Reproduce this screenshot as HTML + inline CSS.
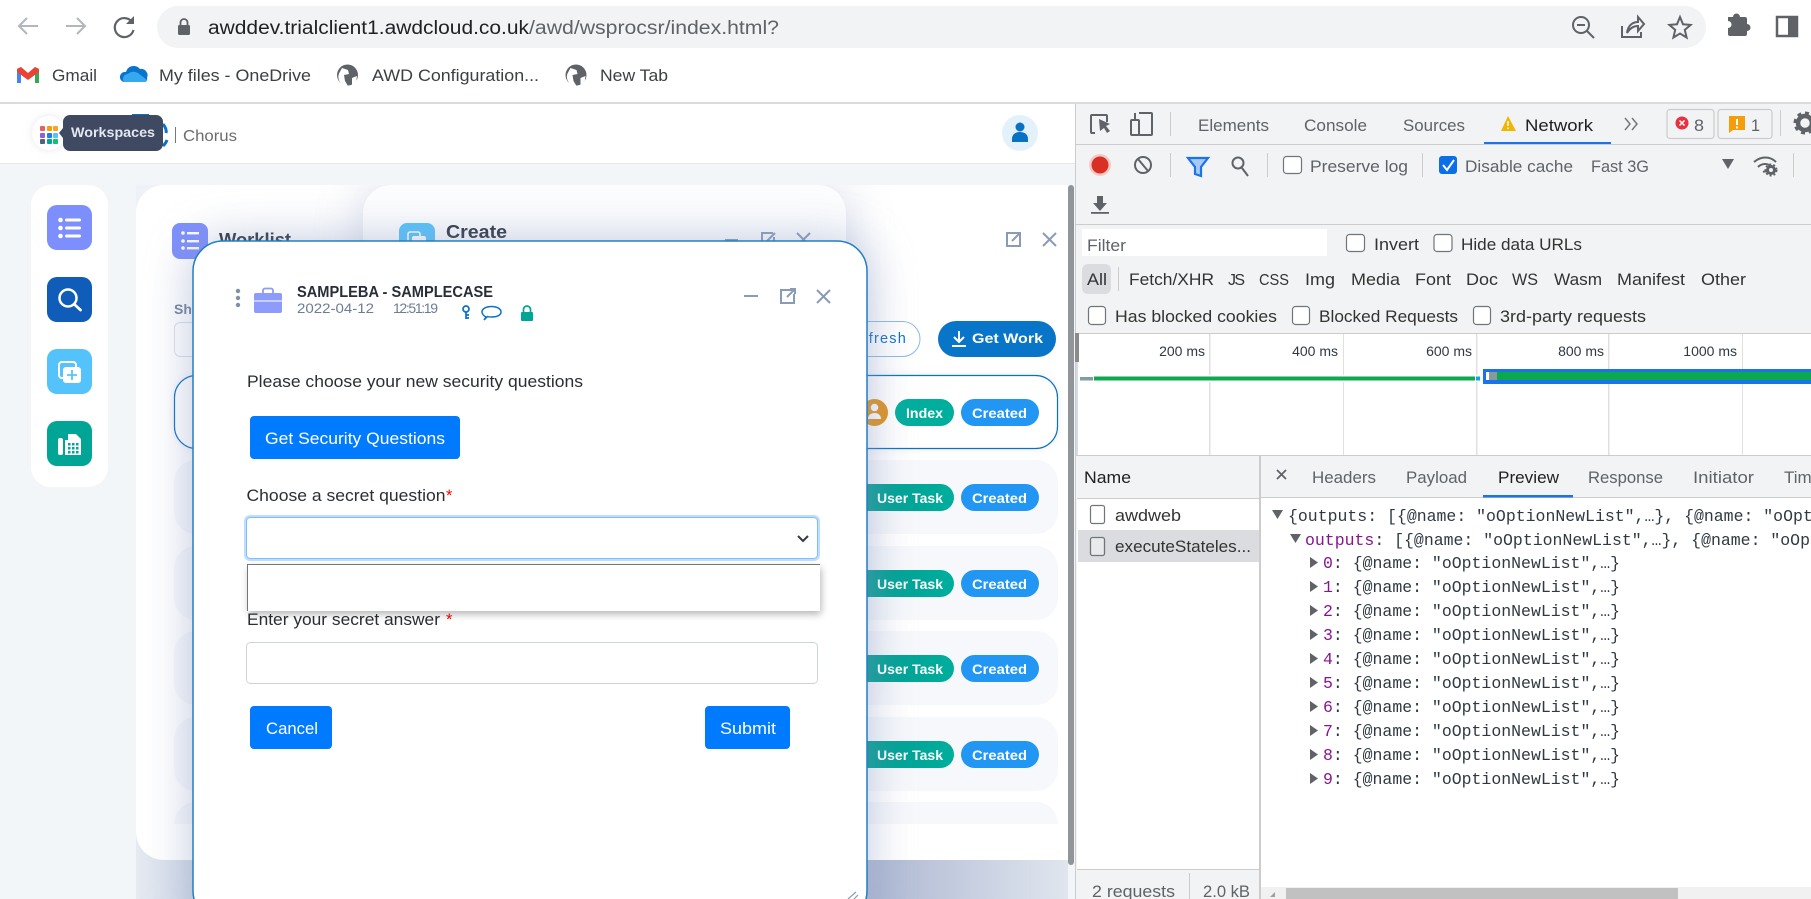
<!DOCTYPE html>
<html lang="en"><head><meta charset="utf-8"><title>Chorus</title>
<style>
html,body{margin:0;padding:0;width:1811px;height:899px;overflow:hidden;background:#fff}
svg{display:block}
text{font-family:"Liberation Sans",Arial,sans-serif;white-space:pre}
.b{font-size:17px;fill:#3c4043}
.d{font-size:17px;fill:#5f6368}
.t{font-size:17px;fill:#333}
.k{font-size:17px;fill:#202124}
.w{font-size:14px;font-weight:700;fill:#fff}
.m{font-family:"Liberation Mono",monospace;font-size:16.5px;fill:#303942}
.p{fill:#881391}
.ms{font-size:14px;fill:#303942}
.cb{fill:#fff;stroke:#70757a;stroke-width:1.2}
.ic{fill:none;stroke:#5f6368;stroke-width:2}
.ctl{fill:none;stroke:#8a9bb5;stroke-width:2}
</style></head><body>
<svg width="1811" height="899" viewBox="0 0 1811 899" xmlns="http://www.w3.org/2000/svg">
<defs>
<filter id="b22" filterUnits="userSpaceOnUse" x="0" y="100" width="1300" height="900"><feGaussianBlur stdDeviation="24"/></filter>
<filter id="b4" filterUnits="userSpaceOnUse" x="0" y="100" width="1300" height="900"><feGaussianBlur stdDeviation="4"/></filter>
<clipPath id="pc"><rect x="136" y="185" width="932" height="714"/></clipPath>
<clipPath id="rowclip"><rect x="174" y="790" width="890" height="34"/></clipPath>
<clipPath id="dt"><rect x="1261" y="498" width="550" height="380"/></clipPath>
<linearGradient id="strip" x1="0" x2="1" y1="0" y2="0"><stop offset="0" stop-color="#e6ebf2"/><stop offset=".1" stop-color="#c3cee0"/><stop offset=".8" stop-color="#b0bad3"/><stop offset="1" stop-color="#e0e6ef"/></linearGradient>
<linearGradient id="teal" x1="0" x2="1" y1="0" y2="0"><stop offset="0" stop-color="#00998f"/><stop offset="1" stop-color="#00ae9d"/></linearGradient>
</defs>

<!-- browser chrome -->
<rect width="1811" height="104" fill="#fff"/>
<rect x="157" y="6" width="1549" height="42" rx="21" fill="#f1f3f4"/>
<path d="M38 26H20M27 18l-8 8 8 8" fill="none" stroke="#b3b6ba" stroke-width="2"/>
<path d="M66 26h18M77 18l8 8-8 8" fill="none" stroke="#b3b6ba" stroke-width="2"/>
<path d="M132 22a9.5 9.5 0 1 0 1.5 8" fill="none" stroke="#5f6368" stroke-width="2.2"/><path d="M134 16v8h-8z" fill="#5f6368"/>
<rect x="178" y="25" width="12" height="10" rx="1.5" fill="#5f6368"/><path d="M180.5 25v-2.5a3.5 3.5 0 0 1 7 0V25" fill="none" stroke="#5f6368" stroke-width="1.8"/>
<text x="208" y="34" font-size="19" fill="#202124" textLength="321" lengthAdjust="spacingAndGlyphs">awddev.trialclient1.awdcloud.co.uk</text>
<text x="529" y="34" font-size="19" fill="#5f6368" textLength="250" lengthAdjust="spacingAndGlyphs">/awd/wsprocsr/index.html?</text>
<circle cx="1581" cy="25" r="8" class="ic"/><path d="M1577 25h8M1587 31l7 7" class="ic"/>
<path d="M1622 26v11h19v-5" class="ic" stroke-width="1.6"/><path d="M1627 33c1-8 6-11 11-11v-5l6 7-6 7v-5c-4 0-8 2-11 7z" class="ic" stroke-width="1.6"/>
<path d="M1680 17l3 7.3 7.6.6-5.8 5 1.8 7.6-6.6-4-6.6 4 1.8-7.6-5.8-5 7.6-.6z" class="ic"/>
<path d="M1728 24h5a3.5 3.5 0 1 1 7 0h5a2 2 0 0 1 2 2v5a3.5 3.5 0 1 1 0 7v3a2 2 0 0 1-2 2h-15a2 2 0 0 1-2-2v-6a3.5 3.5 0 1 0 0-7z" fill="#5f6368" transform="translate(0 -7)"/>
<rect x="1777" y="17" width="20" height="19" fill="none" stroke="#5f6368" stroke-width="2.5"/><rect x="1788" y="17" width="9" height="19" fill="#5f6368"/>

<path d="M17 83V69l4-2v16z" fill="#4285f4"/><path d="M35 83V67l4 2v14z" fill="#34a853"/><path d="M17 69l4-2 7 6 7-6 4 2v3l-11 8-11-8z" fill="#ea4335"/>
<text x="52" y="81" class="b" textLength="45" lengthAdjust="spacingAndGlyphs">Gmail</text>
<path d="M124 82a5 5 0 0 1 2-10 8 8 0 0 1 14-3 6.5 6.5 0 0 1 7 9 3 3 0 0 1-2 4z" fill="#0a73cf"/><path d="M124 82a5 5 0 0 1 4-8 8 8 0 0 1 10-1l9 7a3 3 0 0 1-2 2z" fill="#35a8ee"/>
<text x="159" y="81" class="b" textLength="152" lengthAdjust="spacingAndGlyphs">My files - OneDrive</text>
<circle cx="347.500" cy="75" r="10.500" fill="#5f6368"/><path d="M342 68l6 2 1 4-5 1 1 6 3 5-2 .5c-6-2-9-8-7-13zM352 78l5-2-1 7-4 2z" fill="#fff"/>
<text x="372" y="81" class="b" textLength="167" lengthAdjust="spacingAndGlyphs">AWD Configuration...</text>
<circle cx="576" cy="75" r="10.500" fill="#5f6368"/><path d="M570.500 68l6 2 1 4-5 1 1 6 3 5-2 .5c-6-2-9-8-7-13zM580.500 78l5-2-1 7-4 2z" fill="#fff"/>
<text x="600" y="81" class="b" textLength="68" lengthAdjust="spacingAndGlyphs">New Tab</text>
<rect y="102" width="1811" height="2" fill="#dadce0"/>

<!-- app -->
<rect y="104" width="1075" height="795" fill="#f3f6f9"/>
<rect y="104" width="1075" height="59" fill="#fff"/>
<rect y="163" width="1075" height="1" fill="#e6e8ec"/>
<rect x="132" y="114" width="17" height="4" fill="#0a72c4"/>
<path d="M163 124q4 5 3 9M163 146q3-3 4-6" fill="none" stroke="#0a72c4" stroke-width="3"/>
<circle cx="49" cy="133" r="17" fill="#d5d9e0" opacity=".6" filter="url(#b4)"/><circle cx="49" cy="133" r="17" fill="#fff"/>
<g><rect x="40" y="126" width="5" height="5" rx="1" fill="#e85d6a"/><rect x="47" y="126" width="5" height="5" rx="1" fill="#f59e0b"/><rect x="53" y="126" width="5" height="5" rx="1" fill="#f6a51f"/><rect x="40" y="133" width="5" height="5" rx="1" fill="#8e5fd9"/><rect x="47" y="133" width="5" height="5" rx="1" fill="#1a7fe8"/><rect x="53" y="133" width="5" height="5" rx="1" fill="#57c4f8"/><rect x="40" y="139" width="5" height="5" rx="1" fill="#556080"/><rect x="47" y="139" width="5" height="5" rx="1" fill="#00a596"/><rect x="53" y="139" width="5" height="5" rx="1" fill="#0dc46e"/></g>
<path d="M63 128l-4 5 4 5z" fill="#3f4962"/><rect x="63" y="115" width="100" height="36" rx="7" fill="#3f4962"/>
<text x="71" y="137" font-size="14" font-weight="700" fill="#e4e7ee" textLength="84" lengthAdjust="spacingAndGlyphs">Workspaces</text>
<rect x="175" y="127" width="1" height="16" fill="#777"/>
<text x="183" y="141" font-size="16" fill="#6b6b6b" textLength="54" lengthAdjust="spacingAndGlyphs">Chorus</text>
<circle cx="1020" cy="133" r="18" fill="#e3f1fa"/><circle cx="1020" cy="127" r="4.500" fill="#0a72c4"/><path d="M1012 142v-3c0-5 4-7 8-7s8 2 8 7v3z" fill="#0a72c4"/>

<!-- sidebar -->
<rect x="31" y="185" width="77" height="302" rx="20" fill="#fff"/>
<rect x="47" y="205" width="45" height="45" rx="10" fill="#7d8ffc"/>
<g fill="#fff"><circle cx="60.500" cy="220" r="2.300"/><circle cx="60.500" cy="228" r="2.300"/><circle cx="60.500" cy="236" r="2.300"/><rect x="65" y="218.500" width="16" height="3" rx="1.500"/><rect x="65" y="226.500" width="16" height="3" rx="1.500"/><rect x="65" y="234.500" width="16" height="3" rx="1.500"/></g>
<rect x="47" y="277" width="45" height="45" rx="10" fill="#0f5cb9"/>
<circle cx="68" cy="298" r="8.500" fill="none" stroke="#fff" stroke-width="2.500"/><path d="M74.500 304.500l6 5.500" stroke="#fff" stroke-width="2.800" stroke-linecap="round"/>
<rect x="47" y="349" width="45" height="45" rx="10" fill="#55c3fb"/>
<rect x="59" y="362" width="17" height="16" rx="3" fill="none" stroke="#fff" stroke-width="2"/><rect x="63" y="367" width="18" height="16" rx="3" fill="#fff"/><path d="M72 370v10M67 375h10" stroke="#55c3fb" stroke-width="1.800"/>
<rect x="47" y="421" width="45" height="45" rx="10" fill="#00a596"/>
<rect x="58" y="438" width="5" height="17" rx="2" fill="#fff"/><path d="M68 434h8l5 5v16H65v-15h3z" fill="#fff"/>
<g fill="#00a596"><rect x="68" y="443" width="2.500" height="2.500"/><rect x="72" y="443" width="2.500" height="2.500"/><rect x="76" y="443" width="2.500" height="2.500"/><rect x="68" y="447" width="2.500" height="2.500"/><rect x="72" y="447" width="2.500" height="2.500"/><rect x="76" y="447" width="2.500" height="2.500"/><rect x="68" y="451" width="2.500" height="2.500"/><rect x="72" y="451" width="2.500" height="2.500"/><rect x="76" y="451" width="2.500" height="2.500"/></g>

<!-- worklist panel -->
<rect x="136" y="185" width="60" height="60" fill="#eef1f6"/>
<rect x="136" y="830" width="932" height="69" fill="url(#strip)"/>
<path d="M164 185H1068V860H164a28 28 0 0 1-28-28V213a28 28 0 0 1 28-28z" fill="#fff"/>
<rect x="172" y="223" width="36" height="36" rx="8" fill="#7d8ffc"/>
<g fill="#fff"><circle cx="183" cy="233" r="1.800"/><circle cx="183" cy="241" r="1.800"/><circle cx="183" cy="248" r="1.800"/><rect x="187" y="232" width="12" height="2.400"/><rect x="187" y="240" width="12" height="2.400"/><rect x="187" y="247" width="12" height="2.400"/></g>
<text x="219" y="246" font-size="18" font-weight="700" fill="#2d3540" textLength="72" lengthAdjust="spacingAndGlyphs">Worklist</text>
<text x="174" y="314" font-size="14" font-weight="700" fill="#71809a">Show</text>
<rect x="174.500" y="322.500" width="60" height="34" rx="6" fill="#fff" stroke="#d8dde6"/>
<rect x="800" y="321.500" width="120" height="35" rx="17.500" fill="#fff" stroke="#8abbe2"/>
<text x="907" y="343" text-anchor="end" font-size="14.500" font-weight="400" fill="#0a72c4" letter-spacing="1.2">Refresh</text>
<rect x="938" y="321" width="118" height="36" rx="18" fill="#0875c9"/>
<path d="M959 331v11M954 337l5 5 5-5M952 346h14" fill="none" stroke="#fff" stroke-width="2"/>
<text x="972" y="343" class="w" textLength="71" lengthAdjust="spacingAndGlyphs">Get Work</text>
<rect x="174.500" y="375.500" width="883" height="73" rx="22" fill="#d6dbe5" opacity=".6" filter="url(#b4)"/>
<rect x="174.500" y="375.500" width="883" height="73" rx="22" fill="#fff" stroke="#0a72c4" stroke-width="1.200"/>
<circle cx="874.500" cy="412.500" r="13.500" fill="#e0921c"/><circle cx="874.500" cy="407.500" r="3.800" fill="#fff"/><path d="M868 419c0-4 3-6 6.500-6s6.500 2 6.500 6z" fill="#fff"/>
<rect x="895" y="399" width="59" height="27" rx="13.500" fill="#00ae9d"/><text x="906" y="418" class="w" textLength="37" lengthAdjust="spacingAndGlyphs">Index</text>
<rect x="961" y="399" width="78" height="27" rx="13.500" fill="#2196f3"/><text x="972" y="418" class="w" textLength="55" lengthAdjust="spacingAndGlyphs">Created</text>
<g fill="#f6f8fb"><rect x="174" y="460" width="884" height="74" rx="22"/><rect x="174" y="546" width="884" height="74" rx="22"/><rect x="174" y="631" width="884" height="74" rx="22"/><rect x="174" y="717" width="884" height="74" rx="22"/><rect x="174" y="802" width="884" height="74" rx="22" clip-path="url(#rowclip)"/></g>
<g><rect x="850" y="484" width="104" height="27" rx="13.500" fill="url(#teal)"/><text x="877" y="503" class="w" textLength="66" lengthAdjust="spacingAndGlyphs">User Task</text><rect x="961" y="484" width="78" height="27" rx="13.500" fill="#2196f3"/><text x="972" y="503" class="w" textLength="55" lengthAdjust="spacingAndGlyphs">Created</text></g>
<g><rect x="850" y="570" width="104" height="27" rx="13.500" fill="url(#teal)"/><text x="877" y="589" class="w" textLength="66" lengthAdjust="spacingAndGlyphs">User Task</text><rect x="961" y="570" width="78" height="27" rx="13.500" fill="#2196f3"/><text x="972" y="589" class="w" textLength="55" lengthAdjust="spacingAndGlyphs">Created</text></g>
<g><rect x="850" y="655" width="104" height="27" rx="13.500" fill="url(#teal)"/><text x="877" y="674" class="w" textLength="66" lengthAdjust="spacingAndGlyphs">User Task</text><rect x="961" y="655" width="78" height="27" rx="13.500" fill="#2196f3"/><text x="972" y="674" class="w" textLength="55" lengthAdjust="spacingAndGlyphs">Created</text></g>
<g><rect x="850" y="741" width="104" height="27" rx="13.500" fill="url(#teal)"/><text x="877" y="760" class="w" textLength="66" lengthAdjust="spacingAndGlyphs">User Task</text><rect x="961" y="741" width="78" height="27" rx="13.500" fill="#2196f3"/><text x="972" y="760" class="w" textLength="55" lengthAdjust="spacingAndGlyphs">Created</text></g>
<path d="M1018 233h-11v13h13v-9" class="ctl" stroke-width="1.500"/><path d="M1012 241l8-8M1015 233h5v5" class="ctl" stroke-width="1.500"/>
<path d="M1043 233l13 13M1056 233l-13 13" class="ctl"/>

<!-- create panel -->
<g clip-path="url(#pc)"><rect x="363" y="185" width="483" height="500" rx="28" fill="#97a3c6" opacity=".4" filter="url(#b22)"/></g>
<rect x="363" y="185" width="483" height="400" rx="28" fill="#fcfdfe"/>
<rect x="399" y="223" width="36" height="36" rx="8" fill="#55c3fb"/>
<rect x="408" y="232" width="12" height="12" rx="2" fill="none" stroke="#fff" stroke-width="1.600"/><rect x="412" y="236" width="14" height="14" rx="2" fill="#fff"/>
<text x="446" y="238" font-size="18" font-weight="700" fill="#2d3540" textLength="61" lengthAdjust="spacingAndGlyphs">Create</text>
<path d="M725 240h13" class="ctl"/>
<path d="M773 233h-11v13h12v-9" class="ctl" stroke-width="1.500"/><path d="M767 241l8-8" class="ctl" stroke-width="1.500"/>
<path d="M797 233l13 13M810 233l-13 13" class="ctl"/>

<!-- modal shadow -->
<g clip-path="url(#pc)"><rect x="193" y="241" width="674" height="700" rx="30" fill="#8897c0" opacity=".55" filter="url(#b22)"/></g>
<rect x="1068" y="185" width="7" height="714" fill="#f3f6f9"/>
<rect x="1068" y="185" width="6" height="680" rx="3" fill="#8f9598"/>

<!-- modal -->
<rect x="193" y="241" width="674" height="680" rx="30" fill="#fff" stroke="#1f7fc6" stroke-width="1.500"/>
<g fill="#7e8fa8"><circle cx="238" cy="291" r="2.200"/><circle cx="238" cy="298" r="2.200"/><circle cx="238" cy="305" r="2.200"/></g>
<rect x="254" y="293" width="28" height="20" rx="2" fill="#8d9cfa"/><path d="M263 293v-2.500a2 2 0 0 1 2-2h6a2 2 0 0 1 2 2V293" fill="none" stroke="#8d9cfa" stroke-width="1.800"/><path d="M254 301h28" stroke="#fff" stroke-width="1"/>
<text x="297" y="297" font-size="16" font-weight="700" fill="#272e38" textLength="196" lengthAdjust="spacingAndGlyphs">SAMPLEBA - SAMPLECASE</text>
<text x="297" y="313" font-size="14" fill="#6b7d96" textLength="77" lengthAdjust="spacingAndGlyphs">2022-04-12</text>
<text x="393" y="313" font-size="14" fill="#6b7d96" textLength="45" lengthAdjust="spacing">12:51:19</text>
<circle cx="466" cy="309" r="3" fill="none" stroke="#0a72c4" stroke-width="1.700"/><path d="M466 312v7M466 315h3M466 318h3" fill="none" stroke="#0a72c4" stroke-width="1.700"/>
<path d="M484 320l2-3c-2-1-4-3-4-5 0-3.500 4.500-5.500 9.500-5.500s9.500 2 9.500 5.500-4.500 5-9.500 5c-1.500 0-3 0-4-.5z" fill="none" stroke="#0a72c4" stroke-width="1.500"/>
<rect x="521" y="312" width="12" height="9" rx="1" fill="#00a596"/><path d="M523.500 312v-2.500a3.500 3.500 0 0 1 7 0V312" fill="none" stroke="#00a596" stroke-width="1.700"/>
<path d="M744 296h14" class="ctl"/>
<path d="M793 290h-12v13h13v-9" class="ctl" stroke-width="1.500"/><path d="M787 297l8-8M790 289h5v5" class="ctl" stroke-width="1.500"/>
<path d="M817 290l13 13M830 290l-13 13" class="ctl"/>

<text x="247" y="387" font-size="16.500" fill="#2b2f33" textLength="336" lengthAdjust="spacingAndGlyphs">Please choose your new security questions</text>
<rect x="250" y="416" width="210" height="43" rx="4" fill="#007bff"/>
<text x="265" y="444" font-size="17" fill="#fff" textLength="180" lengthAdjust="spacingAndGlyphs">Get Security Questions</text>
<text x="246.500" y="501" font-size="16.500" fill="#2b2f33" textLength="199" lengthAdjust="spacingAndGlyphs">Choose a secret question</text>
<text x="446" y="501" font-size="16.500" fill="#f00">*</text>
<rect x="244" y="515" width="576" height="46" rx="6" fill="#bfdeff"/>
<rect x="246.500" y="517.500" width="571" height="41" rx="4" fill="#fff" stroke="#80bdff"/>
<path d="M798 536l5 5 5-5" fill="none" stroke="#343a40" stroke-width="2"/>
<text x="247" y="625" font-size="16.500" fill="#2b2f33" textLength="193" lengthAdjust="spacingAndGlyphs">Enter your secret answer</text>
<text x="446" y="625" font-size="16.500" fill="#f00">*</text>
<rect x="249" y="568" width="572" height="46" fill="#000" opacity=".3" filter="url(#b4)"/>
<rect x="247" y="564" width="573" height="47" fill="#fff"/><path d="M247 564.500h573M247.500 564v47" stroke="#777" stroke-width="1" fill="none"/>
<rect x="246.500" y="642.500" width="571" height="41" rx="4" fill="#fff" stroke="#ced4da"/>
<rect x="250" y="706" width="82" height="43" rx="4" fill="#007bff"/><text x="266" y="734" font-size="17" fill="#fff" textLength="52" lengthAdjust="spacingAndGlyphs">Cancel</text>
<rect x="705" y="706" width="85" height="43" rx="4" fill="#007bff"/><text x="720" y="734" font-size="17" fill="#fff" textLength="56" lengthAdjust="spacingAndGlyphs">Submit</text>
<path d="M848 899l8-7M854 899l4-4" stroke="#8a9bb5" stroke-width="1.200"/>

<!-- devtools -->
<rect x="1075" y="104" width="736" height="795" fill="#f1f3f4"/>
<rect x="1075" y="104" width="1" height="795" fill="#ccc"/>
<path d="M1107 122v-6a1 1 0 0 0-1-1h-14a1 1 0 0 0-1 1v16a1 1 0 0 0 1 1h3" class="ic" stroke-width="1.500"/><path d="M1099 119l11 5-4 2 4 5-3 2-3-5-4 3z" fill="#5f6368"/>
<path d="M1139 113h12a1 1 0 0 1 1 1v20a1 1 0 0 1-1 1h-12" class="ic" stroke-width="1.800"/><path d="M1135 113v6" class="ic" stroke-width="1.800"/><rect x="1131" y="120" width="8" height="15" rx="1" class="ic" stroke-width="1.800"/>
<rect x="1170" y="112" width="1" height="24" fill="#ccc"/>
<text x="1198" y="131" class="d" textLength="71" lengthAdjust="spacingAndGlyphs">Elements</text>
<text x="1304" y="131" class="d" textLength="63" lengthAdjust="spacingAndGlyphs">Console</text>
<text x="1403" y="131" class="d" textLength="62" lengthAdjust="spacingAndGlyphs">Sources</text>
<path d="M1508 116l8 15h-15z" fill="#f2b600"/><path d="M1508 121v5M1508 127.500v1.500" stroke="#fff" stroke-width="1.500"/>
<text x="1525" y="131" class="k" textLength="68" lengthAdjust="spacingAndGlyphs">Network</text>
<rect x="1484" y="142" width="127" height="3" fill="#1a73e8"/>
<rect x="1075" y="144" width="736" height="1" fill="#ccc"/>
<path d="M1625 118l5 6-5 6M1632 118l5 6-5 6" fill="none" stroke="#777" stroke-width="1.500"/>
<rect x="1667" y="109.500" width="47" height="29" rx="3" fill="none" stroke="#ccc" stroke-width="1.200"/>
<rect x="1718" y="109.500" width="54" height="29" rx="3" fill="none" stroke="#ccc" stroke-width="1.200"/>
<circle cx="1682" cy="123" r="6.500" fill="#e8303f"/><path d="M1679.500 120.500l5 5M1684.500 120.500l-5 5" stroke="#fff" stroke-width="1.500"/>
<text x="1694" y="131" class="d" textLength="10" lengthAdjust="spacingAndGlyphs">8</text>
<path d="M1729 116h16v14h-12l-4 3z" fill="#f59e0b"/><path d="M1737 119v6M1737 126.500v2" stroke="#fff" stroke-width="2"/>
<text x="1751" y="131" class="d" textLength="9" lengthAdjust="spacingAndGlyphs">1</text>
<rect x="1780" y="110" width="1" height="26" fill="#ccc"/>
<circle cx="1805" cy="123" r="7" fill="none" stroke="#5f6368" stroke-width="4.500"/><circle cx="1805" cy="123" r="10" fill="none" stroke="#5f6368" stroke-width="3" stroke-dasharray="4 3.800"/>

<circle cx="1100" cy="165" r="11" fill="#f6c9c5"/><circle cx="1100" cy="165" r="8.500" fill="#d93025"/>
<circle cx="1143" cy="165" r="8" class="ic" stroke-width="2.800"/><path d="M1138 159l10 12" class="ic" stroke-width="2.800"/>
<rect x="1170" y="153" width="1" height="24" fill="#ccc"/>
<path d="M1188 158h20l-7 9v9l-6-2v-7z" fill="#a8c9f6" stroke="#1a73e8" stroke-width="2.200"/>
<circle cx="1238" cy="163" r="5.500" class="ic"/><path d="M1242 168l6 8" class="ic" stroke-width="2.200"/>
<rect x="1267" y="153" width="1" height="24" fill="#ccc"/>
<rect x="1283.500" y="156.500" width="18" height="17" rx="3" class="cb"/>
<text x="1310" y="172" class="d" textLength="98" lengthAdjust="spacingAndGlyphs">Preserve log</text>
<rect x="1422" y="153" width="1" height="24" fill="#ccc"/>
<rect x="1439" y="156" width="18" height="18" rx="3" fill="#0b6fe8"/><path d="M1443 165l4 5 7-10" fill="none" stroke="#fff" stroke-width="2"/>
<text x="1465" y="172" class="d" textLength="108" lengthAdjust="spacingAndGlyphs">Disable cache</text>
<text x="1591" y="172" class="d" textLength="58" lengthAdjust="spacingAndGlyphs">Fast 3G</text>
<path d="M1722 159h12l-6 10z" fill="#5f6368"/>
<path d="M1754 162c7-6 16-6 22 0M1758 167c4-4 10-4 14 0M1763 172c2-1 3-1 4 0" class="ic" stroke-width="2.200"/><circle cx="1771" cy="170" r="3.500" fill="none" stroke="#5f6368" stroke-width="3"/><circle cx="1771" cy="170" r="5.500" fill="none" stroke="#5f6368" stroke-width="2" stroke-dasharray="2 2"/>
<rect x="1793" y="153" width="1" height="24" fill="#ccc"/>
<path d="M1097 196h6v7h4l-7 8-7-8h4z" fill="#5f6368"/><rect x="1091" y="212" width="18" height="1.800" fill="#5f6368"/>
<rect x="1076" y="224" width="735" height="1" fill="#ccc"/>
<rect x="1082" y="229" width="245" height="27" fill="#fff"/>
<text x="1087" y="251" class="d" textLength="39" lengthAdjust="spacingAndGlyphs">Filter</text>
<rect x="1346.500" y="234.500" width="18" height="17" rx="3" class="cb"/><text x="1374" y="250" class="t" textLength="45" lengthAdjust="spacingAndGlyphs">Invert</text>
<rect x="1434" y="234.500" width="18" height="17" rx="3" class="cb"/><text x="1461" y="250" class="t" textLength="121" lengthAdjust="spacingAndGlyphs">Hide data URLs</text>
<rect x="1082" y="264" width="29" height="30" rx="6" fill="#dadce0"/><text x="1087" y="285" class="t" textLength="20" lengthAdjust="spacingAndGlyphs">All</text>
<rect x="1118" y="267" width="1" height="24" fill="#ccc"/>
<text x="1129" y="285" class="t" textLength="85" lengthAdjust="spacingAndGlyphs">Fetch/XHR</text>
<text x="1228" y="285" class="t" style="font-size:16px" textLength="17" lengthAdjust="spacing">JS</text>
<text x="1259" y="285" class="t" style="font-size:16px" textLength="30" lengthAdjust="spacingAndGlyphs">CSS</text>
<text x="1305" y="285" class="t" textLength="30" lengthAdjust="spacingAndGlyphs">Img</text>
<text x="1351" y="285" class="t" textLength="49" lengthAdjust="spacingAndGlyphs">Media</text>
<text x="1415" y="285" class="t" textLength="36" lengthAdjust="spacingAndGlyphs">Font</text>
<text x="1466" y="285" class="t" textLength="32" lengthAdjust="spacingAndGlyphs">Doc</text>
<text x="1512" y="285" class="t" textLength="26" lengthAdjust="spacingAndGlyphs">WS</text>
<text x="1554" y="285" class="t" textLength="48" lengthAdjust="spacingAndGlyphs">Wasm</text>
<text x="1617" y="285" class="t" textLength="68" lengthAdjust="spacingAndGlyphs">Manifest</text>
<text x="1701" y="285" class="t" textLength="45" lengthAdjust="spacingAndGlyphs">Other</text>
<rect x="1088.500" y="306.500" width="17" height="18" rx="3" class="cb"/><text x="1115" y="322" class="t" textLength="162" lengthAdjust="spacingAndGlyphs">Has blocked cookies</text>
<rect x="1292.500" y="306.500" width="17" height="18" rx="3" class="cb"/><text x="1319" y="322" class="t" textLength="139" lengthAdjust="spacingAndGlyphs">Blocked Requests</text>
<rect x="1473.500" y="306.500" width="17" height="18" rx="3" class="cb"/><text x="1500" y="322" class="t" textLength="146" lengthAdjust="spacingAndGlyphs">3rd-party requests</text>

<!-- timeline -->
<rect x="1076" y="333" width="735" height="122" fill="#fff"/>
<rect x="1076" y="333" width="735" height="1" fill="#ccc"/>
<g fill="#e0e0e0"><rect x="1209" y="334" width="1.500" height="121"/><rect x="1343" y="334" width="1" height="121"/><rect x="1476" y="334" width="1.500" height="121"/><rect x="1608" y="334" width="1.500" height="121"/><rect x="1742" y="334" width="1" height="121"/></g>
<text x="1205" y="356" class="ms" text-anchor="end">200 ms</text>
<text x="1338" y="356" class="ms" text-anchor="end">400 ms</text>
<text x="1472" y="356" class="ms" text-anchor="end">600 ms</text>
<text x="1604" y="356" class="ms" text-anchor="end">800 ms</text>
<text x="1737" y="356" class="ms" text-anchor="end">1000 ms</text>
<rect x="1075" y="333" width="4" height="29" fill="#8a8a8a"/><rect x="1076" y="362" width="2" height="93" fill="#d3dae8"/>
<rect x="1079" y="375" width="400" height="7" fill="#fff"/>
<rect x="1080" y="377" width="13" height="3.500" fill="#7f9ea3"/><rect x="1094" y="376.500" width="381" height="4" fill="#0ea84f"/><rect x="1476" y="376.500" width="4" height="4" fill="#0ba5e0"/>
<rect x="1483" y="369" width="328" height="15" fill="#1a73e8"/><rect x="1486" y="372" width="325" height="8" fill="#0aa84f"/><rect x="1486" y="372" width="3" height="8" fill="#fff"/><rect x="1489" y="372" width="8" height="8" fill="#8a9a9a"/>

<!-- lower panes -->
<rect x="1076" y="455" width="735" height="1" fill="#ccc"/>
<rect x="1077" y="456" width="182" height="443" fill="#fff"/>
<rect x="1077" y="456" width="182" height="42" fill="#f1f3f4"/><rect x="1077" y="498" width="182" height="1" fill="#ccc"/>
<text x="1084" y="483" class="k" textLength="47" lengthAdjust="spacingAndGlyphs">Name</text>
<rect x="1090.500" y="505.500" width="14" height="18" rx="2" class="cb"/>
<text x="1115" y="521" class="t" textLength="66" lengthAdjust="spacingAndGlyphs">awdweb</text>
<rect x="1078" y="530" width="181" height="32" fill="#dadce0"/>
<rect x="1090.500" y="537.500" width="14" height="18" rx="2" fill="#e9eaec" stroke="#70757a" stroke-width="1.300"/>
<text x="1115" y="552" class="t" textLength="136" lengthAdjust="spacingAndGlyphs">executeStateles...</text>
<rect x="1077" y="869" width="182" height="30" fill="#f1f3f4"/><rect x="1077" y="869" width="182" height="1" fill="#ccc"/>
<text x="1092" y="897" class="d" textLength="83" lengthAdjust="spacingAndGlyphs">2 requests</text>
<rect x="1189" y="873" width="1" height="26" fill="#ccc"/>
<text x="1203" y="897" class="d" textLength="47" lengthAdjust="spacingAndGlyphs">2.0 kB</text>
<rect x="1259" y="456" width="2" height="443" fill="#ccc"/>
<rect x="1261" y="456" width="550" height="443" fill="#fff"/>
<rect x="1261" y="456" width="550" height="41" fill="#f1f3f4"/><rect x="1261" y="497" width="550" height="1" fill="#ccc"/>
<path d="M1277 470l9 9M1286 470l-9 9" stroke="#5f6368" stroke-width="1.800"/>
<text x="1312" y="483" class="d" textLength="64" lengthAdjust="spacingAndGlyphs">Headers</text>
<text x="1406" y="483" class="d" textLength="61" lengthAdjust="spacingAndGlyphs">Payload</text>
<text x="1498" y="483" class="k" textLength="61" lengthAdjust="spacingAndGlyphs">Preview</text>
<text x="1588" y="483" class="d" textLength="75" lengthAdjust="spacingAndGlyphs">Response</text>
<text x="1693" y="483" class="d" textLength="61" lengthAdjust="spacingAndGlyphs">Initiator</text>
<text x="1784" y="483" class="d">Timing</text>
<rect x="1483" y="495" width="90" height="2.500" fill="#1a73e8"/>
<g clip-path="url(#dt)">
<path d="M1272 510h11l-5.500 9z" fill="#5f6368"/>
<text x="1288" y="521" class="m">{outputs: [{@name: "oOptionNewList",…}, {@name: "oOptionNewList",…},</text>
<path d="M1290 534h11l-5.500 9z" fill="#5f6368"/>
<text x="1305" y="545" class="m"><tspan class="p">outputs</tspan>: [{@name: "oOptionNewList",…}, {@name: "oOptionNewList",…},</text>
<g fill="#5f6368"><path d="M1310 557v11l8-5.500z"/><path d="M1310 581v11l8-5.500z"/><path d="M1310 605v11l8-5.500z"/><path d="M1310 629v11l8-5.500z"/><path d="M1310 653v11l8-5.500z"/><path d="M1310 677v11l8-5.500z"/><path d="M1310 701v11l8-5.500z"/><path d="M1310 725v11l8-5.500z"/><path d="M1310 749v11l8-5.500z"/><path d="M1310 773v11l8-5.500z"/></g>
<text x="1323" y="568" class="m"><tspan class="p">0</tspan>: {@name: "oOptionNewList",…}</text>
<text x="1323" y="592" class="m"><tspan class="p">1</tspan>: {@name: "oOptionNewList",…}</text>
<text x="1323" y="616" class="m"><tspan class="p">2</tspan>: {@name: "oOptionNewList",…}</text>
<text x="1323" y="640" class="m"><tspan class="p">3</tspan>: {@name: "oOptionNewList",…}</text>
<text x="1323" y="664" class="m"><tspan class="p">4</tspan>: {@name: "oOptionNewList",…}</text>
<text x="1323" y="688" class="m"><tspan class="p">5</tspan>: {@name: "oOptionNewList",…}</text>
<text x="1323" y="712" class="m"><tspan class="p">6</tspan>: {@name: "oOptionNewList",…}</text>
<text x="1323" y="736" class="m"><tspan class="p">7</tspan>: {@name: "oOptionNewList",…}</text>
<text x="1323" y="760" class="m"><tspan class="p">8</tspan>: {@name: "oOptionNewList",…}</text>
<text x="1323" y="784" class="m"><tspan class="p">9</tspan>: {@name: "oOptionNewList",…}</text>
</g>
<rect x="1261" y="887" width="550" height="12" fill="#f1f1f1"/>
<path d="M1275 892l-5 5h5z" fill="#a0a0a0"/>
<rect x="1286" y="888" width="392" height="11" fill="#c1c1c1"/>
</svg>
</body></html>
